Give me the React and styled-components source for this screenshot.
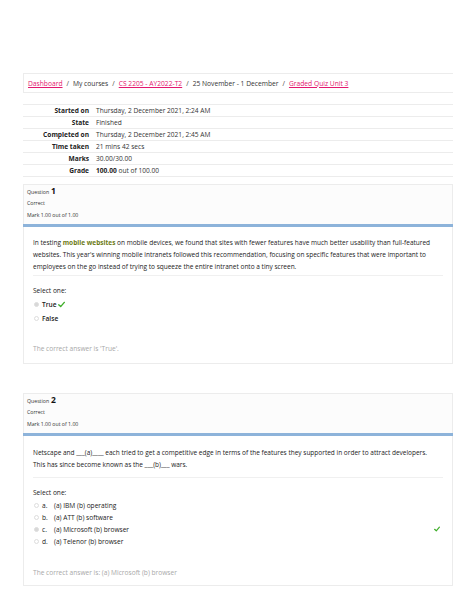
import React from "react";
import styled, { createGlobalStyle } from "styled-components";

const Global = createGlobalStyle`
  html, body { margin: 0; padding: 0; background: #fff; }
  body {
    font-family: "Open Sans", "Noto Sans", sans-serif;
    color: #222;
    font-size: 6.6px;
  }
`;

const Page = styled.div`
  padding: 73px 21px 0 23px;
`;

const Crumbs = styled.nav`
  height: 20px;
  border: 1px solid #ececec;
  border-right: none;
  box-sizing: border-box;
  display: flex;
  align-items: center;
  gap: 4px;
  padding-left: 4px;
  font-size: 6.7px;
  color: #333;
`;

const Crumb = styled.a`
  color: #e4176e;
  text-decoration: underline;
`;

const Sep = styled.span`
  color: #444;
`;

const Summary = styled.div`
  margin-top: 11px;
  border-bottom: 1px solid #ececec;
`;

const SumRow = styled.div`
  display: grid;
  grid-template-columns: 66px 1fr;
  column-gap: 7px;
  height: 12px;
  align-items: center;
  border-top: 1px solid #ececec;
  box-sizing: border-box;
`;

const SumLabel = styled.div`
  text-align: right;
  font-weight: 700;
  color: #222;
`;

const SumValue = styled.div`
  color: #333;
  b { font-weight: 700; color: #222; }
`;

const Question = styled.section`
  margin-top: ${(p) => p.$top}px;
`;

const Info = styled.div`
  height: 40px;
  box-sizing: border-box;
  border: 1px solid #ececec;
  border-bottom: none;
  background: #fcfcfc;
  padding: 0 3px;
  display: flex;
  flex-direction: column;
  font-size: 5.2px;
  line-height: 11.3px;
  color: #333;
`;

const QNo = styled.div`
  display: flex;
  align-items: baseline;
  gap: 2px;
  b { font-size: 8.5px; font-weight: 700; color: #111; }
`;

const Bar = styled.div`
  height: 3px;
  background: #8db3da;
`;

const Content = styled.div`
  border: 1px solid #ececec;
  border-top: none;
  padding: ${(p) => p.$pad};
  box-sizing: border-box;
  height: ${(p) => p.$h}px;
  display: flex;
  flex-direction: column;
`;

const Prompt = styled.p`
  margin: 0;
  line-height: 12px;
  font-size: 6.5px;
  color: #222;
  padding-right: 8px;
  padding-bottom: ${(p) => p.$gap}px;
  border-bottom: 1px solid #f0f0f0;
`;

const Keyword = styled.strong`
  color: #6d7a15;
  font-weight: 700;
`;

const Answer = styled.div`
  margin-top: ${(p) => p.$top}px;
  font-size: 6.6px;
`;

const SelectOne = styled.div`
  line-height: 12px;
  color: #222;
`;

const Option = styled.div`
  display: flex;
  align-items: center;
  height: ${(p) => p.$h}px;
  padding-left: 1px;
  font-weight: ${(p) => (p.$strong ? 600 : 500)};
  color: #1a1a1a;
  position: relative;
`;

const Radio = styled.span`
  width: 5px;
  height: 5px;
  border-radius: 50%;
  border: 1px solid #ddd;
  background: ${(p) => (p.$on ? "#d8d8d8" : "#fff")};
  margin-right: 3px;
  box-sizing: border-box;
`;

const Letter = styled.span`
  width: 12px;
`;

const Feedback = styled.div`
  margin-top: auto;
  color: #a8a8a8;
  font-size: 6.6px;
  line-height: 12px;
`;

const RightMark = styled.span`
  position: absolute;
  right: ${(p) => p.$right}px;
  top: 50%;
  transform: translateY(-50%);
  display: inline-flex;
`;

const Tick = ({ size = 7 }) => (
  <svg width={size} height={size} viewBox="0 0 10 10">
    <path d="M1 5.5 L3.8 8 L9 2" fill="none" stroke="#3fae2a" strokeWidth="2" strokeLinecap="round" strokeLinejoin="round" />
  </svg>
);

const summary = [
  ["Started on", "Thursday, 2 December 2021, 2:24 AM"],
  ["State", "Finished"],
  ["Completed on", "Thursday, 2 December 2021, 2:45 AM"],
  ["Time taken", "21 mins 42 secs"],
  ["Marks", "30.00/30.00"],
  ["Grade", <><b>100.00</b> out of 100.00</>],
];

function InfoBlock({ n }) {
  return (
    <Info>
      <QNo>Question <b>{n}</b></QNo>
      <div>Correct</div>
      <div>Mark 1.00 out of 1.00</div>
    </Info>
  );
}

export default function App() {
  return (
    <>
      <Global />
      <Page>
        <Crumbs>
          <Crumb>Dashboard</Crumb>
          <Sep>/</Sep>
          <span>My courses</span>
          <Sep>/</Sep>
          <Crumb>CS 2205 - AY2022-T2</Crumb>
          <Sep>/</Sep>
          <span>25 November - 1 December</span>
          <Sep>/</Sep>
          <Crumb>Graded Quiz Unit 3</Crumb>
        </Crumbs>

        <Summary>
          {summary.map(([k, v]) => (
            <SumRow key={k}>
              <SumLabel>{k}</SumLabel>
              <SumValue>{v}</SumValue>
            </SumRow>
          ))}
        </Summary>

        <Question $top={7}>
          <InfoBlock n={1} />
          <Bar />
          <Content $h={137} $pad="10px 9px 8px">
            <Prompt $gap={2}>
              In testing <Keyword>mobile websites</Keyword> on mobile devices, we found that sites with fewer features have much better usability than full-featured websites. This year's winning mobile intranets followed this recommendation, focusing on specific features that were important to employees on the go instead of trying to squeeze the entire intranet onto a tiny screen.
            </Prompt>
            <Answer $top={9}>
              <SelectOne>Select one:</SelectOne>
              <Option $h={14} $strong>
                <Radio $on />True&nbsp;<Tick size={7} />
              </Option>
              <Option $h={14} $strong>
                <Radio />False
              </Option>
            </Answer>
            <Feedback>The correct answer is 'True'.</Feedback>
          </Content>
        </Question>

        <Question $top={29}>
          <InfoBlock n={2} />
          <Bar />
          <Content $h={150} $pad="11px 9px 6px">
            <Prompt $gap={6}>
              Netscape and ___(a)____ each tried to get a competitive edge in terms of the features they supported in order to attract developers. This has since become known as the ___(b)___ wars.
            </Prompt>
            <Answer $top={9}>
              <SelectOne>Select one:</SelectOne>
              <Option $h={12}><Radio /><Letter>a.</Letter>(a) IBM (b) operating</Option>
              <Option $h={12}><Radio /><Letter>b.</Letter>(a) ATT (b) software</Option>
              <Option $h={12}>
                <Radio $on /><Letter>c.</Letter>(a) Microsoft (b) browser
                <RightMark $right={3}><Tick size={6} /></RightMark>
              </Option>
              <Option $h={12}><Radio /><Letter>d.</Letter>(a) Telenor (b) browser</Option>
            </Answer>
            <Feedback>The correct answer is: (a) Microsoft (b) browser</Feedback>
          </Content>
        </Question>
      </Page>
    </>
  );
}
